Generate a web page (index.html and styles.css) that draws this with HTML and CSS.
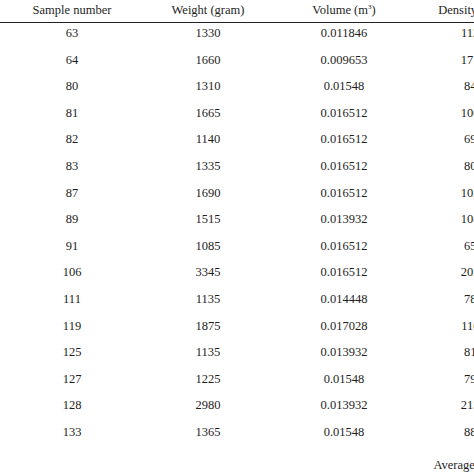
FILE: index.html
```html
<!DOCTYPE html>
<html>
<head>
<meta charset="utf-8">
<link rel="stylesheet" href="styles.css">
</head>
<body>
<table class="data">
  <colgroup>
    <col class="c1"><col class="c2"><col class="c3"><col class="c4">
  </colgroup>
  <thead>
    <tr><th>Sample number</th><th>Weight (gram)</th><th>Volume (m<sup>3</sup>)</th><th>Density (kg/m<sup>3</sup>)</th></tr>
  </thead>
  <tbody>
    <tr><td>63</td><td>1330</td><td>0.011846</td><td>112.27</td></tr>
    <tr><td>64</td><td>1660</td><td>0.009653</td><td>171.97</td></tr>
    <tr><td>80</td><td>1310</td><td>0.01548</td><td>84.63</td></tr>
    <tr><td>81</td><td>1665</td><td>0.016512</td><td>100.84</td></tr>
    <tr><td>82</td><td>1140</td><td>0.016512</td><td>69.04</td></tr>
    <tr><td>83</td><td>1335</td><td>0.016512</td><td>80.85</td></tr>
    <tr><td>87</td><td>1690</td><td>0.016512</td><td>102.35</td></tr>
    <tr><td>89</td><td>1515</td><td>0.013932</td><td>108.74</td></tr>
    <tr><td>91</td><td>1085</td><td>0.016512</td><td>65.71</td></tr>
    <tr><td>106</td><td>3345</td><td>0.016512</td><td>202.58</td></tr>
    <tr><td>111</td><td>1135</td><td>0.014448</td><td>78.56</td></tr>
    <tr><td>119</td><td>1875</td><td>0.017028</td><td>110.11</td></tr>
    <tr><td>125</td><td>1135</td><td>0.013932</td><td>81.47</td></tr>
    <tr><td>127</td><td>1225</td><td>0.01548</td><td>79.13</td></tr>
    <tr><td>128</td><td>2980</td><td>0.013932</td><td>213.90</td></tr>
    <tr><td>133</td><td>1365</td><td>0.01548</td><td>88.18</td></tr>
    <tr class="avg"><td></td><td></td><td></td><td>Average = 109.40</td></tr>
  </tbody>
</table>
</body>
</html>
```
FILE: styles.css
```css
html, body {
  margin: 0;
  padding: 0;
  background: #ffffff;
  overflow: hidden;
}
body {
  width: 474px;
  height: 474px;
  font-family: "Liberation Serif", "Times New Roman", serif;
  font-size: 12.5px;
  color: #1e1e1e;
}
.data {
  border-collapse: collapse;
  table-layout: fixed;
  width: 540px;
}
.c1 { width: 144px; }
.c2 { width: 128px; }
.c3 { width: 144px; }
.c4 { width: 124px; }
.data th {
  font-weight: normal;
  text-align: center;
  padding: 3px 0 4px;
  line-height: 15px;
  border-bottom: 1.6px solid #222;
  white-space: nowrap;
}
.data sup {
  font-size: 7px;
  line-height: 0;
  vertical-align: 5px;
}
.data td {
  text-align: center;
  padding: 3px 0 8.6px;
  line-height: 15px;
  white-space: nowrap;
}
.data .avg td {
  padding-top: 9px;
}
```
